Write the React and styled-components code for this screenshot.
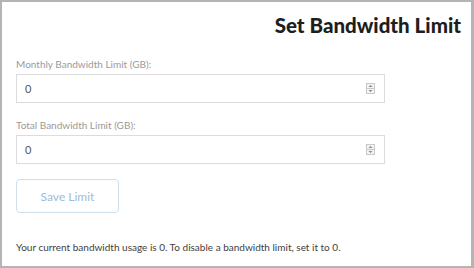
import styled, { createGlobalStyle } from 'styled-components';

const GlobalStyle = createGlobalStyle`
  html, body {
    margin: 0;
    padding: 0;
    background: #fff;
  }
  * {
    box-sizing: border-box;
  }
`;

function NumberField({ label, value }) {
  return (
    <Field>
      <Label>{label}</Label>
      <InputBox>
        <Value>{value}</Value>
        <Spinner>
          <svg width="9" height="11" viewBox="0 0 9 11">
            <rect x="0.5" y="0.5" width="8" height="10" fill="#f3f3f3" stroke="#c9c9c9" />
            <line x1="0.5" y1="5.5" x2="8.5" y2="5.5" stroke="#c9c9c9" />
            <path d="M4.5 2 L6.5 4 L2.5 4 Z" fill="#888" />
            <path d="M4.5 9 L6.5 7 L2.5 7 Z" fill="#888" />
          </svg>
        </Spinner>
      </InputBox>
    </Field>
  );
}

export default function App() {
  return (
    <>
      <GlobalStyle />
      <Frame>
        <Title>Set Bandwidth Limit</Title>
        <Form>
          <NumberField label="Monthly Bandwidth Limit (GB):" value="0" />
          <NumberField label="Total Bandwidth Limit (GB):" value="0" />
        </Form>
        <SaveButton disabled>Save Limit</SaveButton>
        <Note>Your current bandwidth usage is 0. To disable a bandwidth limit, set it to 0.</Note>
      </Frame>
    </>
  );
}

const Frame = styled.div`
  width: 474px;
  height: 268px;
  border-top: 2px solid #b4b4b4;
  border-left: 2px solid #b4b4b4;
  border-right: 3px solid #b4b4b4;
  border-bottom: 2px solid #b4b4b4;
  padding: 0 8px 0 14px;
  display: flex;
  flex-direction: column;
  align-items: flex-start;
  font-family: Lato, "Open Sans", sans-serif;
`;

const Title = styled.h1`
  align-self: flex-end;
  margin: 9px 2px 0 0;
  font-size: 20.5px;
  font-weight: 900;
  line-height: 28px;
  color: #1e1e1e;
`;

const Form = styled.div`
  display: flex;
  flex-direction: column;
  gap: 15px;
  margin-top: 18px;
`;

const Field = styled.div`
  display: flex;
  flex-direction: column;
  gap: 3px;
`;

const Label = styled.label`
  font-size: 10px;
  line-height: 14px;
  color: #9a9a9a;
`;

const InputBox = styled.div`
  width: 369px;
  height: 29px;
  border: 1px solid #dcdcdc;
  display: flex;
  align-items: center;
  justify-content: space-between;
  padding: 0 9px 0 8px;
`;

const Value = styled.span`
  font-size: 11px;
  color: #555;
`;

const Spinner = styled.span`
  display: flex;
`;

const SaveButton = styled.button`
  margin-top: 15px;
  width: 103px;
  height: 34px;
  border: 1px solid #cfe0ec;
  border-radius: 4px;
  background: #fff;
  color: #9dbcd6;
  font-family: inherit;
  font-size: 12px;
`;

const Note = styled.p`
  margin: 27px 0 0;
  font-size: 10px;
  line-height: 14px;
  color: #3e3e3e;
`;
